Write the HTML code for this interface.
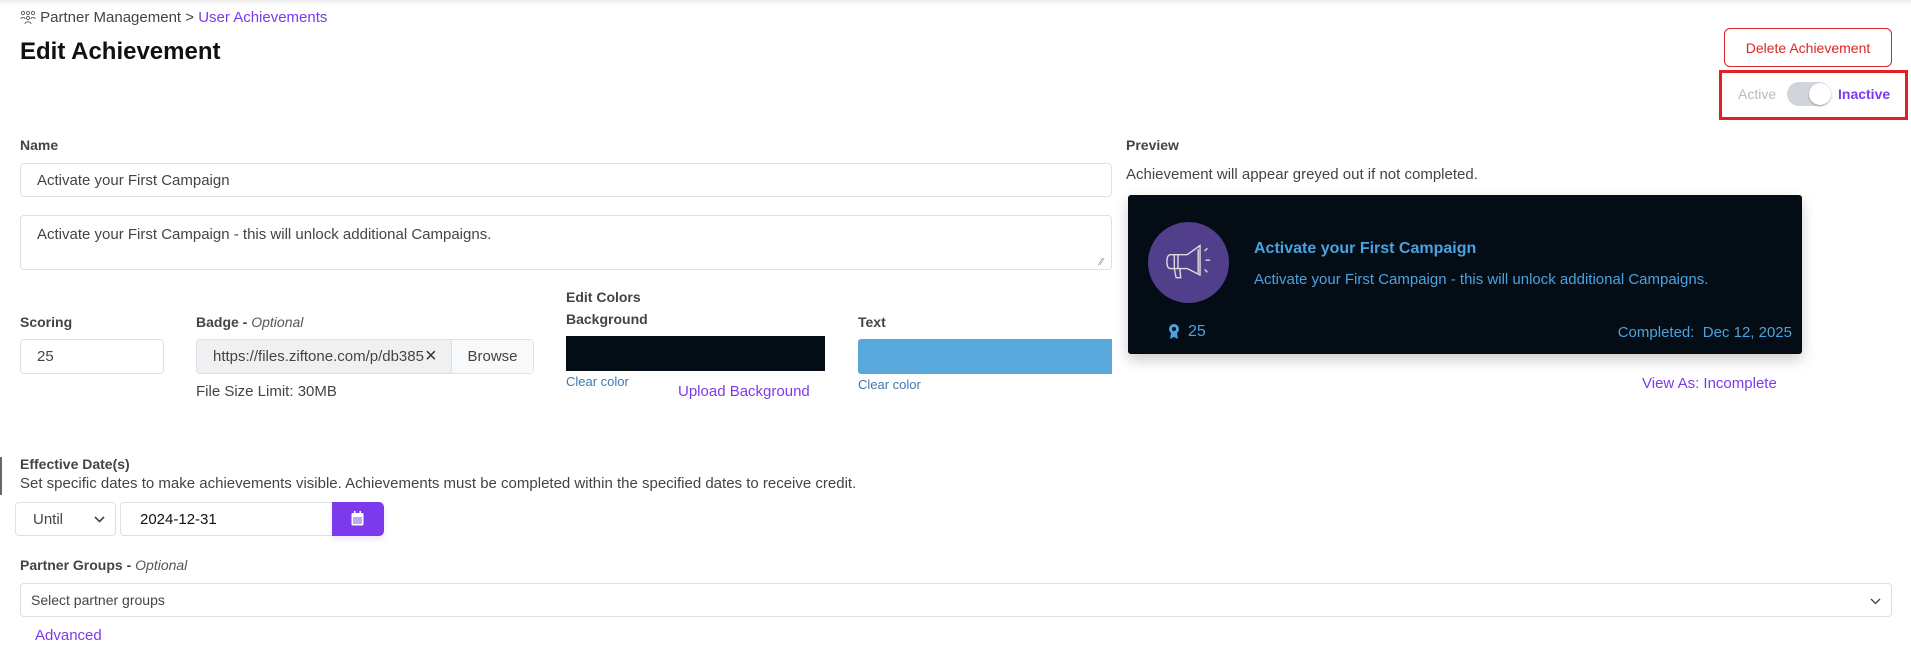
<!DOCTYPE html>
<html><head><style>
*{box-sizing:border-box;margin:0;padding:0}
body{width:1911px;height:669px;overflow:hidden;background:#fff;font-family:"Liberation Sans",sans-serif;font-size:15px;color:#333;position:relative}
.a{position:absolute;white-space:nowrap}
.lbl{font-weight:bold;color:#444;font-size:14px}
.inp{position:absolute;border:1px solid #dde1e6;border-radius:4px;background:#fff;color:#444;font-size:15px;padding-left:16px;display:flex;align-items:center}
.purple{color:#7c3aed}
</style></head><body>
<div class="a" style="left:0;top:0;width:1911px;height:6px;background:linear-gradient(#eee,#fff)"></div>
<div class="a" style="left:0;top:457px;width:2px;height:38px;background:#666"></div>

<div class="a" style="left:20px;top:9px;font-size:15px;color:#444">
<svg width="16" height="14" viewBox="0 0 16 14" style="vertical-align:-2px" fill="none" stroke="#666" stroke-width="1"><circle cx="3" cy="3" r="1.6"/><circle cx="8" cy="3" r="1.6"/><circle cx="13" cy="3" r="1.6"/><circle cx="8" cy="8" r="1.6"/><path d="M1 9c0-2 4-2 4 0M11 9c0-2 4-2 4 0M5 14c0-3 6-3 6 0"/></svg>
Partner Management &gt; <span class="purple">User Achievements</span></div>
<div class="a" style="left:20px;top:38px;font-size:24px;font-weight:bold;color:#111">Edit Achievement</div>

<div class="a" style="left:1724px;top:28px;width:168px;height:39px;border:1px solid #dc2626;border-radius:6px;color:#dc2626;font-size:14px;display:flex;align-items:center;justify-content:center">Delete Achievement</div>
<div class="a" style="left:1719px;top:70px;width:189px;height:50px;border:3px solid #e41e26"></div>
<div class="a" style="left:1738px;top:86px;color:#bbb;font-size:14px">Active</div>
<div class="a" style="left:1787px;top:82px;width:44px;height:24px;border-radius:12px;background:#d1d5db"></div>
<div class="a" style="left:1809px;top:83px;width:22px;height:22px;border-radius:50%;background:#fff;box-shadow:0 1px 2px rgba(0,0,0,.3)"></div>
<div class="a purple" style="left:1838px;top:86px;font-size:14px;font-weight:bold">Inactive</div>

<div class="a lbl" style="left:20px;top:137px">Name</div>
<div class="inp" style="left:20px;top:163px;width:1092px;height:34px">Activate your First Campaign</div>
<div class="inp" style="left:20px;top:215px;width:1092px;height:55px;align-items:flex-start;padding-top:10px">Activate your First Campaign - this will unlock additional Campaigns.</div>
<div class="a" style="left:1100px;top:257px;color:#888;font-size:10px">⁄⁄</div>

<div class="a lbl" style="left:20px;top:314px">Scoring</div>
<div class="inp" style="left:20px;top:339px;width:144px;height:35px">25</div>
<div class="a lbl" style="left:196px;top:314px">Badge - <i style="font-weight:normal;color:#555">Optional</i></div>
<div class="inp" style="left:196px;top:339px;width:338px;height:35px;background:#eef0f2;padding-left:16px">https://files.ziftone.com/p/db385<span style="font-size:20px;color:#333;margin-left:1px">×</span></div>
<div class="a" style="left:451px;top:340px;width:82px;height:33px;background:#f8f9fa;border-left:1px solid #dde1e6;display:flex;align-items:center;justify-content:center;color:#444">Browse</div>
<div class="a" style="left:196px;top:383px;color:#444">File Size Limit: 30MB</div>

<div class="a lbl" style="left:566px;top:289px">Edit Colors</div>
<div class="a lbl" style="left:566px;top:311px">Background</div>
<div class="a" style="left:566px;top:336px;width:259px;height:35px;background:#040c16"></div>
<div class="a" style="left:566px;top:374px;color:#3d78b0;font-size:13px">Clear color</div>
<div class="a purple" style="left:678px;top:383px;font-size:15px">Upload Background</div>
<div class="a lbl" style="left:858px;top:314px">Text</div>
<div class="a" style="left:858px;top:339px;width:254px;height:35px;background:#58a8dc;border-radius:3px 0 0 3px"></div>
<div class="a" style="left:858px;top:377px;color:#3d78b0;font-size:13px">Clear color</div>

<div class="a lbl" style="left:1126px;top:137px">Preview</div>
<div class="a" style="left:1126px;top:166px;color:#444">Achievement will appear greyed out if not completed.</div>
<div class="a" style="left:1128px;top:195px;width:674px;height:159px;background:#040c16;border-radius:3px;box-shadow:0 6px 14px rgba(0,0,0,.2)"></div>
<div class="a" style="left:1148px;top:222px;width:81px;height:81px;border-radius:50%;background:#513f8c"></div>
<svg class="a" style="left:1161px;top:240px" width="56" height="46" viewBox="0 0 52 50" fill="none" stroke="#ddd" stroke-width="1.5"><path d="M6 16h18l14-10v32l-14-7H6c-3 0-4-3-4-7s1-8 4-8z"/><path d="M10 16v15M14 16v15M10 31l2 10h5l-1-10"/><path d="M36 10v26"/><path d="M43 12l3-3M44 22h5M43 32l3 3"/></svg>
<div class="a" style="left:1254px;top:240px;color:#4aa3df;font-size:16px;font-weight:bold">Activate your First Campaign</div>
<div class="a" style="left:1254px;top:271px;color:#4aa3df;font-size:15px">Activate your First Campaign - this will unlock additional Campaigns.</div>
<svg class="a" style="left:1168px;top:323px" width="12" height="17" viewBox="0 0 12 17"><circle cx="6" cy="6" r="5" fill="#4aa3df"/><circle cx="6" cy="6" r="2" fill="#040c16"/><path d="M3 10l-1 6 4-2 4 2-1-6z" fill="#4aa3df"/></svg>
<div class="a" style="left:1188px;top:323px;color:#4aa3df;font-size:16px">25</div>
<div class="a" style="left:1600px;top:324px;color:#4aa3df;font-size:15px;width:192px;text-align:right">Completed:&nbsp; Dec 12, 2025</div>
<div class="a purple" style="left:1642px;top:375px;font-size:15px">View As: Incomplete</div>

<div class="a lbl" style="left:20px;top:456px">Effective Date(s)</div>
<div class="a" style="left:20px;top:475px;color:#444">Set specific dates to make achievements visible. Achievements must be completed within the specified dates to receive credit.</div>
<div class="inp" style="left:15px;top:502px;width:101px;height:34px;padding-left:17px">Until<svg style="position:absolute;right:10px;top:13px" width="11" height="7" viewBox="0 0 11 7" fill="none" stroke="#444" stroke-width="1.6"><path d="M1 1l4.5 4.5L10 1"/></svg></div>
<div class="inp" style="left:120px;top:502px;width:220px;height:34px;padding-left:19px;color:#111;border-radius:4px 0 0 4px">2024-12-31</div>
<div class="a" style="left:332px;top:502px;width:52px;height:34px;background:#7c3aed;border-radius:0 5px 5px 0;box-shadow:0 3px 6px rgba(124,58,237,.15)"></div>
<svg class="a" style="left:351px;top:511px" width="13" height="15" viewBox="0 0 13 15"><rect x="0.5" y="2" width="12" height="12.5" rx="1.5" fill="#fff"/><rect x="2" y="6" width="9" height="7" fill="#7c3aed" opacity=".45"/><rect x="3" y="0" width="1.5" height="3" fill="#fff"/><rect x="8.5" y="0" width="1.5" height="3" fill="#fff"/></svg>

<div class="a lbl" style="left:20px;top:557px">Partner Groups - <i style="font-weight:normal;color:#555">Optional</i></div>
<div class="inp" style="left:20px;top:583px;width:1872px;height:34px;padding-left:10px;font-size:14px;color:#444">Select partner groups<svg style="position:absolute;right:10px;top:14px" width="11" height="7" viewBox="0 0 11 7" fill="none" stroke="#444" stroke-width="1.3"><path d="M1 1l4.5 4.5L10 1"/></svg></div>
<div class="a purple" style="left:35px;top:627px;font-size:15px">Advanced</div>
</body></html>
